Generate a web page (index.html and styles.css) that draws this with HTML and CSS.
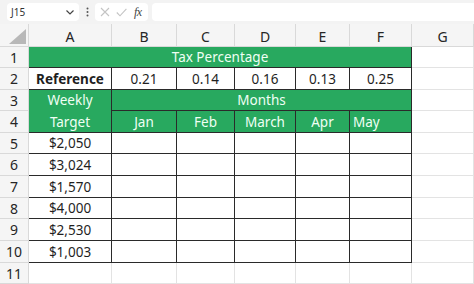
FILE: index.html
```html
<!DOCTYPE html>
<html>
<head>
<meta charset="utf-8">
<link rel="stylesheet" href="styles.css">
</head>
<body>
<div class="app">
  <div class="toolbar">
    <div class="namebox">
      <span class="ref">J15</span>
      <svg class="chev" width="8" height="5" viewBox="0 0 8 5"><path d="M0.5 0.5 L4 4 L7.5 0.5" fill="none" stroke="#444" stroke-width="1.2"/></svg>
    </div>
    <svg class="dots" width="3" height="10" viewBox="0 0 3 10"><circle cx="1.5" cy="1.5" r="1" fill="#555"/><circle cx="1.5" cy="5" r="1" fill="#555"/><circle cx="1.5" cy="8.5" r="1" fill="#555"/></svg>
    <div class="fxbox">
      <svg width="10" height="10" viewBox="0 0 10 10"><path d="M1 1 L9 9 M9 1 L1 9" stroke="#c4c4c4" stroke-width="1.1" fill="none"/></svg>
      <svg width="11" height="9" viewBox="0 0 11 9"><path d="M0.8 4.5 L4 7.8 L10.4 0.8" stroke="#c4c4c4" stroke-width="1.1" fill="none"/></svg>
      <span class="fx">fx</span>
    </div>
    <div class="formula"></div>
  </div>
  <div class="sheet">
    <div class="corner"><svg width="17" height="15" viewBox="0 0 17 15"><path d="M17 0 L17 15 L0 15 Z" fill="#b8b8b8"/></svg></div>
    <div class="ch">A</div><div class="ch">B</div><div class="ch">C</div><div class="ch">D</div><div class="ch">E</div><div class="ch">F</div><div class="ch">G</div>

    <div class="rh">1</div>
    <div class="c g db span-af">Tax Percentage</div>
    <div class="c"></div>

    <div class="rh">2</div>
    <div class="c d b">Reference</div>
    <div class="c d">0.21</div><div class="c d">0.14</div><div class="c d">0.16</div><div class="c d">0.13</div><div class="c d">0.25</div>
    <div class="c"></div>

    <div class="rh">3</div>
    <div class="c g db wk">Weekly<br>Target</div>
    <div class="c g db span-bf">Months</div>
    <div class="c"></div>

    <div class="rh">4</div>
    <div class="c g db">Jan</div><div class="c g db">Feb</div><div class="c g db">March</div><div class="c g db">Apr</div><div class="c g db left">May</div>
    <div class="c"></div>

    <div class="rh">5</div>
    <div class="c d">$2,050</div><div class="c d"></div><div class="c d"></div><div class="c d"></div><div class="c d"></div><div class="c d"></div><div class="c"></div>
    <div class="rh">6</div>
    <div class="c d">$3,024</div><div class="c d"></div><div class="c d"></div><div class="c d"></div><div class="c d"></div><div class="c d"></div><div class="c"></div>
    <div class="rh">7</div>
    <div class="c d">$1,570</div><div class="c d"></div><div class="c d"></div><div class="c d"></div><div class="c d"></div><div class="c d"></div><div class="c"></div>
    <div class="rh">8</div>
    <div class="c d">$4,000</div><div class="c d"></div><div class="c d"></div><div class="c d"></div><div class="c d"></div><div class="c d"></div><div class="c"></div>
    <div class="rh">9</div>
    <div class="c d">$2,530</div><div class="c d"></div><div class="c d"></div><div class="c d"></div><div class="c d"></div><div class="c d"></div><div class="c"></div>
    <div class="rh">10</div>
    <div class="c d">$1,003</div><div class="c d"></div><div class="c d"></div><div class="c d"></div><div class="c d"></div><div class="c d"></div><div class="c"></div>
    <div class="rh">11</div>
    <div class="c"></div><div class="c"></div><div class="c"></div><div class="c"></div><div class="c"></div><div class="c"></div><div class="c"></div>
  </div>
</div>
</body>
</html>
```
FILE: styles.css
```css
* { box-sizing: border-box; }
html, body { margin: 0; padding: 0; background: #fff; }
body { width: 474px; height: 284px; overflow: hidden; font-family: "Noto Sans", "Open Sans", sans-serif; color: #1f1f1f; }
.app { display: flex; flex-direction: column; width: 474px; }

.toolbar {
  height: 24px;
  background: #f3f3f3;
  display: flex;
  align-items: center;
  padding-left: 7px;
}
.namebox {
  width: 72px; height: 18px;
  background: #fff;
  border-radius: 4px;
  display: flex; align-items: center; justify-content: space-between;
  padding: 0 5px 0 4px;
}
.ref { font-size: 10px; color: #333; }
.chev { margin-top: 1px; }
.dots { margin-left: 7px; margin-right: 6px; }
.fxbox {
  width: 53px; height: 18px; background: #fff; border-radius: 4px;
  display: flex; align-items: center; gap: 6px; padding-left: 5px;
}
.fx { font-family: "Liberation Serif", serif; font-style: italic; font-size: 12px; color: #444; margin-left: 1px; letter-spacing: -0.5px; }
.formula { flex: 1; height: 18px; background: #fff; margin-left: 4px; border-radius: 4px 0 0 4px; }

.sheet {
  display: grid;
  grid-template-columns: 29px 83px 65px 58px 61px 54px 62px 62px;
  grid-template-rows: 23px 21px 22px 21px 22px 21px 22px 22px 21px 22px 22px 21px;
  font-size: 13.5px;
}
.corner, .ch, .rh {
  background: #f5f5f5;
  border-right: 1px solid #d9d9d9;
  border-bottom: 1px solid #d9d9d9;
  display: flex; align-items: center; justify-content: center;
  color: #262626;
}
.corner { align-items: flex-end; justify-content: flex-end; padding: 0 2px 2px 0; }
.ch { padding-top: 2px; font-size: 14px; }
.rh { font-size: 14px; }
.c {
  border-right: 1px solid #e3e3e3;
  border-bottom: 1px solid #e3e3e3;
  display: flex; align-items: center; justify-content: center;
  white-space: nowrap;
}
.g { background: #28a95f; color: #effff4; }
.db, .d { border-right-color: #2a2a2a; border-bottom-color: #2a2a2a; }
.b { font-weight: 700; }
.left { justify-content: flex-start; padding-left: 3px; }
.span-af { grid-column: 2 / span 6; }
.span-bf { grid-column: 3 / span 5; }
.wk { grid-row: span 2; text-align: center; line-height: 22px; white-space: normal; }
```
